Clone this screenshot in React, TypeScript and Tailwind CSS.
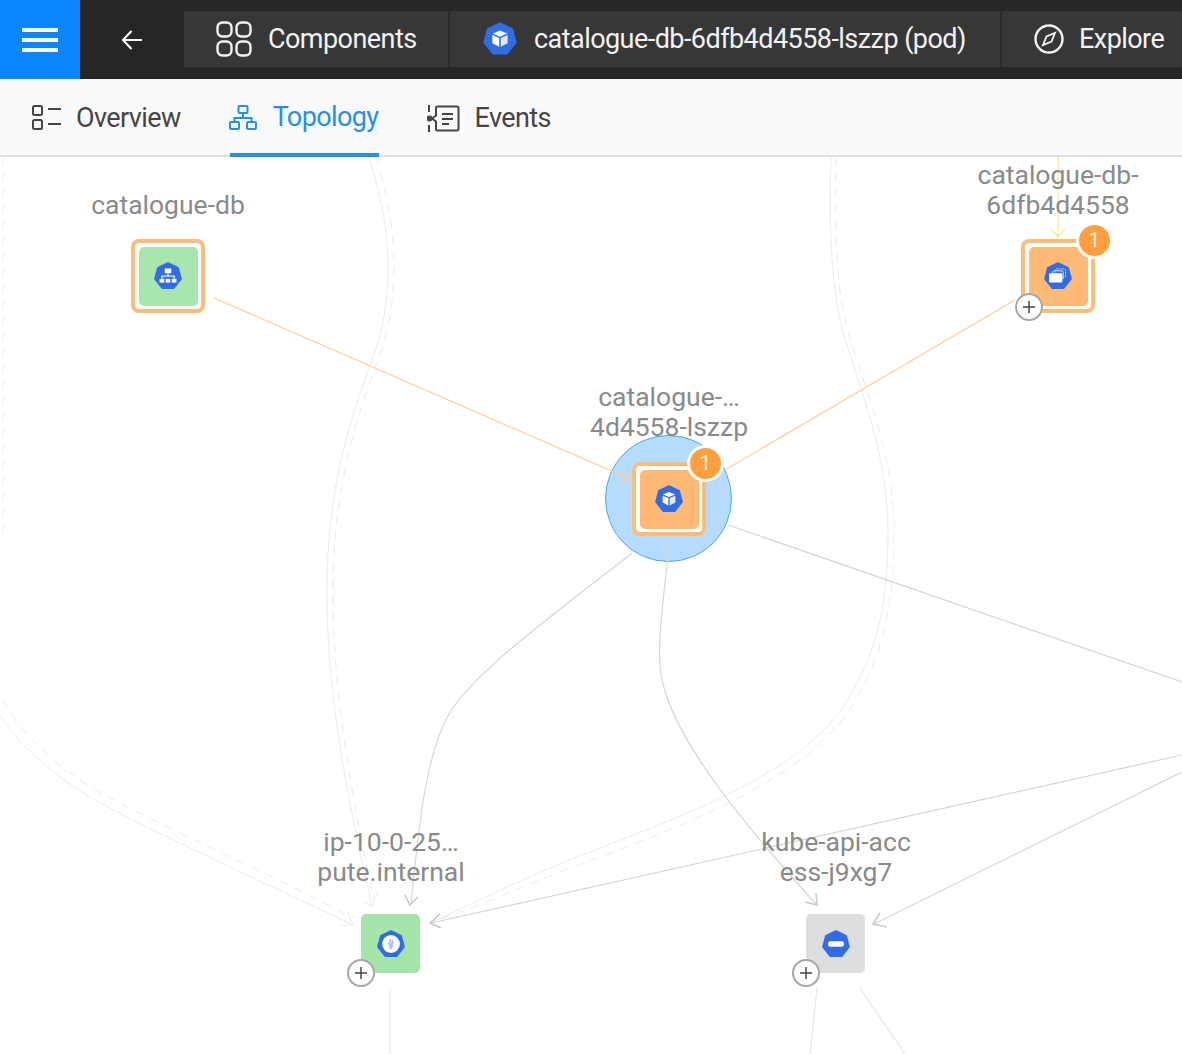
import type { ReactNode } from "react";

const font = "font-['Roboto',_'Liberation_Sans',_sans-serif]";

// k8s style heptagon with a white glyph inside
function Hept({ size, children }: { size: number; children?: ReactNode }) {
  return (
    <svg width={size} height={size} viewBox="0 0 32 32" className="block">
      <polygon
        points="16,2.5 26.5,7.5 29.5,19 22,28.5 10,28.5 2.5,19 5.5,7.5"
        fill="#326ce5"
        stroke="#326ce5"
        strokeWidth="2.5"
        strokeLinejoin="round"
      />
      {children}
    </svg>
  );
}

const Cube = () => (
  <g>
    <polygon points="16,8.5 22.5,11.2 16,13.9 9.5,11.2" fill="#fff" />
    <polygon points="9.2,12.4 15.3,15 15.3,22.8 9.2,19.8" fill="#fff" />
    <polygon points="22.8,12.4 16.7,15 16.7,22.8 22.8,19.8" fill="#dfe8fb" />
  </g>
);

const Tree = () => (
  <g fill="#fff">
    <rect x="12.5" y="8" width="7" height="5" />
    <rect x="15.4" y="13" width="1.2" height="3" />
    <rect x="9" y="15.5" width="14" height="1.2" />
    <rect x="9" y="16" width="1.2" height="3" />
    <rect x="22" y="16" width="1.2" height="3" />
    <rect x="7" y="19" width="5" height="4" />
    <rect x="13.5" y="19" width="5" height="4" />
    <rect x="20" y="19" width="5" height="4" />
  </g>
);

const Frames = () => (
  <g>
    <rect x="13" y="8.5" width="11" height="9" rx="1.5" fill="none" stroke="#cfdcf9" strokeWidth="1" strokeDasharray="2 1" />
    <rect x="10.5" y="10.5" width="11" height="9" rx="1.5" fill="none" stroke="#e6edfc" strokeWidth="1" />
    <rect x="6.5" y="13" width="14" height="10" rx="1.5" fill="#fff" />
  </g>
);

const Helm = () => (
  <g>
    <circle cx="16" cy="16" r="9.5" fill="#fff" />
    <path d="M15 10.5v11M17.5 11l-1 10M12.5 15l6 3M19 14l-5 5" stroke="#a3bcf2" strokeWidth="1.4" fill="none" />
  </g>
);

const Bar = () => <rect x="7.5" y="13" width="17" height="6" rx="2.5" fill="#fff" />;

function Badge() {
  return (
    <div className="absolute right-[-22px] top-[-21px] flex h-[37px] w-[37px] items-center justify-center rounded-full border-[3px] border-white bg-[#ff9f3e] text-[21px] leading-none text-[#fff3e3]">
      1
    </div>
  );
}

function Plus({ className }: { className: string }) {
  return (
    <div className={`absolute flex h-[28px] w-[28px] items-center justify-center rounded-full border-2 border-[#a8a8a8] bg-white ${className}`}>
      <svg width="14" height="14" viewBox="0 0 14 14">
        <path d="M7 1v12M1 7h12" stroke="#444" strokeWidth="1.5" />
      </svg>
    </div>
  );
}

function Label({ lines, className }: { lines: string[]; className: string }) {
  return (
    <div className={`absolute w-[240px] text-center text-[26.5px] leading-[30px] text-[#8a8a8a] ${className}`}>
      {lines.map((l) => (
        <div key={l}>{l}</div>
      ))}
    </div>
  );
}

// square with the orange selection ring
function Ringed({ fill, children, className }: { fill: string; children: ReactNode; className: string }) {
  return (
    <div className={`absolute h-[74px] w-[74px] rounded-[8px] border-4 border-[#ffbc78] bg-white p-[3.5px] ${className}`}>
      <div className={`flex h-full w-full items-center justify-center rounded-[5px] ${fill}`}>{children}</div>
    </div>
  );
}

function Plain({ fill, children, className }: { fill: string; children: ReactNode; className: string }) {
  return (
    <div className={`absolute flex h-[59px] w-[59px] items-center justify-center rounded-[5px] ${fill} ${className}`}>
      {children}
    </div>
  );
}

function Edges() {
  const faint = "#ebebed";
  const mid = "#d6d6d6";
  return (
    <svg className="absolute inset-0 h-full w-full" viewBox="0 157 1182 897" fill="none" strokeWidth="1.2">
      {/* faint pairs */}
      <g stroke={faint} strokeWidth="1">
        <path d="M369 157C380 195 388 225 388 265C388 310 380 340 370 365C350 420 327 490 327 590C327 690 345 790 372 905" />
        <path d="M376 157C387 195 394 225 394 265C394 310 386 340 376 365C356 420 333 490 333 590C333 690 350 790 374 900" strokeDasharray="9 7" />
        <path d="M831 157C830 200 829 260 838 310C848 365 888 440 888 530C888 600 880 650 843 707C800 770 700 810 587 853C530 875 480 900 430 923" />
        <path d="M836 157C835 200 834 260 843 310C853 365 894 440 894 530C894 600 886 655 848 712C805 775 705 818 592 860C535 880 485 905 434 921" strokeDasharray="9 7" />
        <path d="M0 715C20 748 60 780 100 803C180 845 280 890 353 925" />
        <path d="M3 700C24 740 64 772 106 796C186 838 284 880 350 917" strokeDasharray="9 7" />
        <path d="M3 157V540" strokeDasharray="9 7" />
        <path d="M340 926L353 925L348 912M363 902L372 906L377 894" />
      </g>
      {/* orange edges into the pod */}
      <g stroke="#fbcf96">
        <path d="M214 298L630 479" />
        <path d="M1015 300L725 470" />
        <path d="M618 471L632 478L620 484" />
      </g>
      <path d="M1058 157V236M1051 229L1058 237L1065 229" stroke="#f5e98f" />
      {/* grey edges */}
      <g stroke={mid}>
        <path d="M632 553C580 595 480 665 450 712C428 750 420 810 411 904" />
        <path d="M669 545C665 590 655 650 662 680C675 740 740 820 816 904" />
        <path d="M728 525L1182 682" />
        <path d="M1182 755L431 923" />
        <path d="M1182 772L874 924" />
      </g>
      <g stroke="#c8c8c8" strokeWidth="1.5">
        <path d="M405 895L410 905L418 897" />
        <path d="M805 902L817 905L816 893" />
        <path d="M887 927L873 924L880 913" />
        <path d="M440 914L430 923L441 928" />
      </g>
      <g stroke="#e6e6e6">
        <path d="M390 990V1054" />
        <path d="M817 988L810 1054" />
        <path d="M860 988L905 1054" />
      </g>
    </svg>
  );
}

export default function App() {
  return (
    <div className={`flex h-[1054px] w-full flex-col overflow-hidden bg-white ${font}`}>
      {/* Top bar */}
      <header className="flex h-[79px] shrink-0 bg-[#262626]">
        <button className="flex w-[80px] flex-col items-center justify-center gap-[6px] bg-[#0a84ff]">
          <span className="h-[4px] w-[36px] bg-white" />
          <span className="h-[4px] w-[36px] bg-white" />
          <span className="h-[4px] w-[36px] bg-white" />
        </button>
        <div className="flex w-[104px] items-center justify-center">
          <svg width="22" height="22" viewBox="0 0 22 22" fill="none" stroke="#fff" strokeWidth="2">
            <path d="M21 11H2M10.5 2L2 11l8.5 9" />
          </svg>
        </div>
        <div className="mt-[11px] flex h-[56px] flex-1 bg-[#373737] text-[27px] tracking-[-0.55px] text-[#f2f2f2]">
          <div className="flex w-[266px] items-center gap-[16px] border-r-2 border-[#2b2b2b] pl-[32px]">
            <svg width="36" height="36" viewBox="0 0 36 36" fill="none" stroke="#f2f2f2" strokeWidth="2.4">
              <rect x="1.5" y="1.5" width="14" height="14" rx="5" />
              <rect x="20.5" y="1.5" width="14" height="14" rx="5" />
              <rect x="1.5" y="20.5" width="14" height="14" rx="5" />
              <rect x="20.5" y="20.5" width="14" height="14" rx="5" />
            </svg>
            Components
          </div>
          <div className="flex w-[552px] items-center gap-[16px] border-r-2 border-[#2b2b2b] pl-[32px]">
            <Hept size={36}>
              <Cube />
            </Hept>
            catalogue-db-6dfb4d4558-lszzp (pod)
          </div>
          <div className="flex items-center gap-[15px] pl-[32px]">
            <svg width="30" height="30" viewBox="0 0 30 30" fill="none" stroke="#f2f2f2" strokeWidth="2.4">
              <circle cx="15" cy="15" r="13.5" />
              <path d="M21 9L17.5 17.5L9 21L12.5 12.5Z" strokeWidth="1.8" />
            </svg>
            Explore
          </div>
        </div>
      </header>

      {/* Sub navigation */}
      <nav className="flex h-[78px] shrink-0 gap-[48px] border-b-2 border-[#dfdfdf] bg-[#fafafa] pl-[32px] text-[27px] tracking-[-0.6px] text-[#454545]">
        <div className="flex items-center gap-[15px] pt-[2px]">
          <svg width="29" height="26" viewBox="0 0 29 26" fill="none" stroke="#454545" strokeWidth="2">
            <rect x="1" y="1" width="9" height="9" rx="1.5" />
            <rect x="1" y="15" width="9" height="9" rx="1.5" />
            <path d="M16 4h13M16 19h13" />
          </svg>
          Overview
        </div>
        <div className="-mb-[2px] ml-[1px] flex items-center gap-[16px] border-b-4 border-[#2490ec] pt-[3px] text-[#2490ec]">
          <svg width="28" height="25" viewBox="0 0 28 25" fill="none" stroke="#2490ec" strokeWidth="2" className="-ml-px">
            <rect x="9.5" y="1" width="9" height="7" rx="1" />
            <rect x="1" y="17" width="9" height="7" rx="1" />
            <rect x="18" y="17" width="9" height="7" rx="1" />
            <path d="M14 8v5M5.5 17v-4h17v4" />
          </svg>
          Topology
        </div>
        <div className="flex items-center gap-[15px] pt-[2px]">
          <svg width="33" height="27" viewBox="0 0 33 27" fill="none" stroke="#454545" strokeWidth="2">
            <path d="M2 0v7M2 20v7" />
            <circle cx="2.5" cy="13.5" r="2" fill="#454545" />
            <path d="M5 13.5l4-3V3a1.5 1.5 0 0 1 1.5-1.5H30A1.5 1.5 0 0 1 31.5 3v21a1.5 1.5 0 0 1-1.5 1.5H10.5A1.5 1.5 0 0 1 9 24v-7.5z" />
            <path d="M15 9h11M15 14h11M15 19h7" />
          </svg>
          Events
        </div>
      </nav>

      {/* Topology canvas */}
      <main className="relative flex-1 overflow-hidden bg-white">
        <div className="absolute left-[605px] top-[278px] h-[127px] w-[127px] rounded-full border border-[#4ba6f0] bg-[#b5dcfe]" />
        <Edges />

        <Label lines={["catalogue-db"]} className="left-[48px] top-[33px]" />
        <Ringed fill="bg-[#a9e5ae]" className="left-[131px] top-[82px]">
          <Hept size={30}>
            <Tree />
          </Hept>
        </Ringed>

        <Label lines={["catalogue-db-", "6dfb4d4558"]} className="left-[938px] top-[3px]" />
        <Ringed fill="bg-[#ffbb76]" className="left-[1021px] top-[82px]">
          <Hept size={30}>
            <Frames />
          </Hept>
          <Badge />
          <Plus className="bottom-[-12px] left-[-10px]" />
        </Ringed>

        <Label lines={["catalogue-…", "4d4558-lszzp"]} className="left-[549px] top-[225px]" />
        <Ringed fill="bg-[#ffbb76]" className="left-[632px] top-[305px]">
          <Hept size={30}>
            <Cube />
          </Hept>
          <Badge />
        </Ringed>

        <Label lines={["ip-10-0-25…", "pute.internal"]} className="left-[271px] top-[670px]" />
        <Plain fill="bg-[#a6e5a9]" className="left-[361px] top-[757px]">
          <Hept size={30}>
            <Helm />
          </Hept>
          <Plus className="bottom-[-14px] left-[-14px]" />
        </Plain>

        <Label lines={["kube-api-acc", "ess-j9xg7"]} className="left-[716px] top-[670px]" />
        <Plain fill="bg-[#dcdee0]" className="left-[806px] top-[757px]">
          <Hept size={30}>
            <Bar />
          </Hept>
          <Plus className="bottom-[-14px] left-[-14px]" />
        </Plain>
      </main>
    </div>
  );
}
